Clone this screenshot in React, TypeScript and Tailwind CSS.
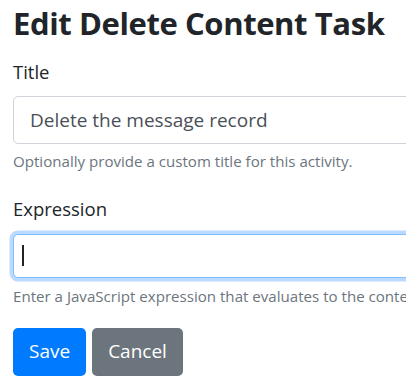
import React from 'react'

const font = { fontFamily: '"Open Sans", "Noto Sans", sans-serif' }

const App: React.FC = () => {
  return (
    <div className="w-[406px] h-[388px] overflow-hidden bg-white text-[#212529]" style={font}>
      <div className="w-[720px] pl-[13px]">
        <h1 className="text-[31px] font-bold leading-[1.2] pt-[4.5px] tracking-[-0.4px]">Edit Delete Content Task</h1>

        <div className="mt-[16px]">
          <label className="block text-[18.5px] leading-[1.5] mb-[11px]">Title</label>
          <input
            type="text"
            defaultValue="Delete the message record"
            className="block w-full h-[48px] px-[16px] text-[19px] text-[#495057] border border-[#ced4da] rounded-[5px] outline-none"
          />
          <small className="block mt-[5.5px] text-[15.1px] leading-[22px] text-[#6c757d]">
            Optionally provide a custom title for this activity.
          </small>
        </div>

        <div className="mt-[23px]">
          <label className="block text-[18.5px] leading-[1.5] mb-[11px]">Expression</label>
          <div className="flex items-center w-full h-[44px] pl-[8px] bg-white border border-[#80bdff] rounded-[5px] shadow-[0_0_0_3.5px_rgba(0,123,255,0.27)]">
            <span className="block w-[1.5px] h-[21px] bg-[#212529]" />
          </div>
          <small className="block mt-[7px] text-[15.1px] leading-[22px] text-[#6c757d] whitespace-nowrap">
            Enter a JavaScript expression that evaluates to the content to delete.
          </small>
        </div>

        <div className="mt-[21px] flex gap-[6px]">
          <button className="h-[48px] px-[16px] text-[19px] text-white bg-[#007bff] rounded-[5px]">Save</button>
          <button className="h-[48px] px-[16px] text-[19px] text-white bg-[#6c757d] rounded-[5px]">Cancel</button>
        </div>
      </div>
    </div>
  )
}

export default App
